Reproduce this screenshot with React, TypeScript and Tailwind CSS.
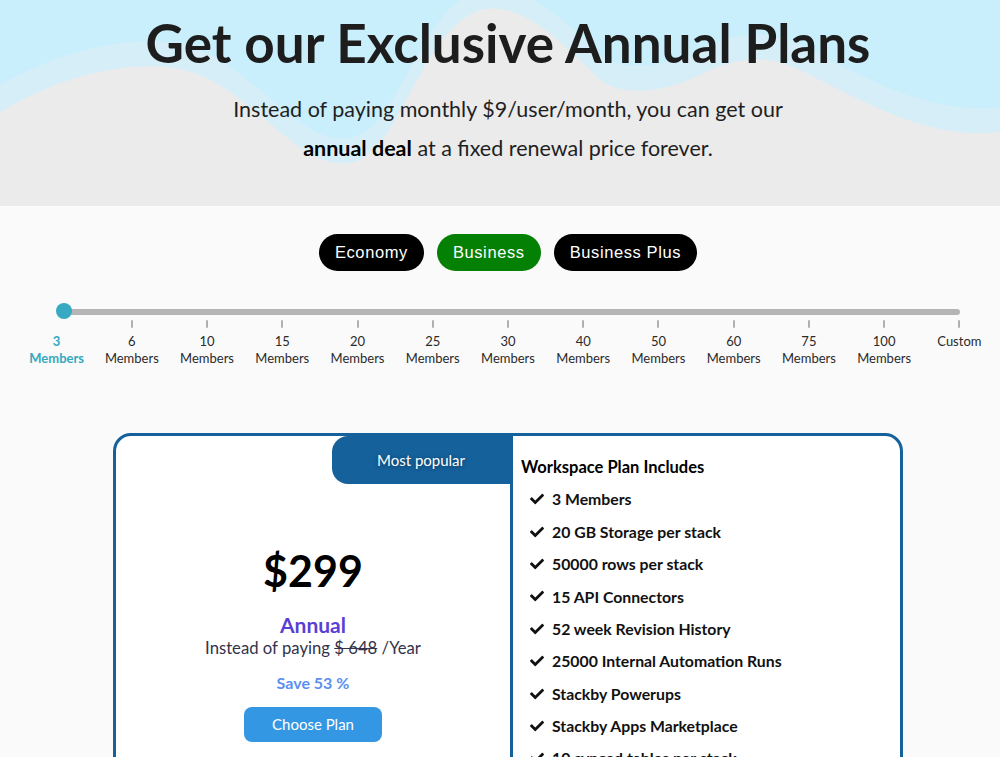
import { FaCheck } from "react-icons/fa";

const plans = [
  { name: "Economy", active: false },
  { name: "Business", active: true },
  { name: "Business Plus", active: false },
];

const steps = ["3", "6", "10", "15", "20", "25", "30", "40", "50", "60", "75", "100", "Custom"];

const features = [
  "3 Members",
  "20 GB Storage per stack",
  "50000 rows per stack",
  "15 API Connectors",
  "52 week Revision History",
  "25000 Internal Automation Runs",
  "Stackby Powerups",
  "Stackby Apps Marketplace",
  "10 synced tables per stack",
  "Priority Support",
];

const HeaderWaves = () => (
  <svg
    className="absolute inset-0 h-full w-full"
    viewBox="0 0 1000 206"
    preserveAspectRatio="none"
  >
    <rect width="1000" height="206" fill="#c9eefc" />
    <path
      d="M0,85 C70,45 150,30 200,50 C260,75 300,145 350,138 C400,130 420,5 480,-10 C520,-20 560,15 600,55 C620,70 660,70 700,50 C740,30 770,30 800,45 C870,80 930,115 1000,107 L1000,206 L0,206 Z"
      fill="#d6eef8"
    />
    <path
      d="M0,112 C70,70 150,55 200,75 C260,100 300,170 350,163 C400,155 420,30 480,10 C520,0 560,40 600,80 C620,95 660,95 700,75 C740,55 770,55 800,70 C870,105 930,140 1000,132 L1000,206 L0,206 Z"
      fill="#ebebeb"
    />
  </svg>
);

const Slider = () => (
  <div className="mt-[38px]">
    <div className="relative ml-[64px] h-[6px] w-[896px] rounded-full bg-[#b5b5b5]">
      <div className="absolute left-[-8px] top-[-6px] h-[16px] w-[16px] rounded-full bg-[#37a9c2]" />
    </div>
    <div className="ml-[19px] grid w-[978px] grid-cols-13">
      {steps.map((s, i) => (
        <div key={s} className="flex flex-col items-center">
          <div
            className={`mt-[5px] h-[8px] w-[2px] rounded-full ${i === 0 ? "bg-transparent" : "bg-[#b0b0b0]"}`}
          />
          <div
            className={`mt-[5px] text-center text-[13px] leading-[17px] ${i === 0 ? "font-bold text-[#35a8c0]" : "text-[#2a2a2a]"}`}
          >
            <div>{s}</div>
            {s !== "Custom" && <div>Members</div>}
          </div>
        </div>
      ))}
    </div>
  </div>
);

export default function App() {
  return (
    <div className="min-h-screen bg-[#fafafa] font-['Lato',sans-serif]">
      <header className="relative h-[206px] overflow-hidden">
        <HeaderWaves />
        <div className="relative flex flex-col items-center pl-[16px] pt-[14px] text-center">
          <h1 className="text-[53px] font-bold leading-[58px] text-[#1d1d1d]">
            Get our Exclusive Annual Plans
          </h1>
          <p className="mt-[18px] text-[21.5px] leading-[39px] text-[#1f1f1f]">
            Instead of paying monthly $9/user/month, you can get our
            <br />
            <span className="font-bold text-black">annual deal</span> at a fixed renewal price forever.
          </p>
        </div>
      </header>

      <section className="pt-[28px]">
        <div className="flex justify-center gap-[13px] pl-[16px] font-['Liberation_Sans',sans-serif]">
          {plans.map((p) => (
            <button
              key={p.name}
              className={`h-[37px] rounded-full px-[16px] text-[16.5px] tracking-[0.6px] text-white ${p.active ? "bg-[#048004]" : "bg-black"}`}
            >
              {p.name}
            </button>
          ))}
        </div>

        <Slider />

        <div className="ml-[113px] mt-[66px] w-[790px] pb-10">
          <div className="flex overflow-hidden rounded-[18px] border-[3px] border-[#15619c] bg-white">
            <div className="relative w-[397px] border-r-[3px] border-[#15619c]">
              <div className="absolute right-0 top-0 flex h-[48px] w-[178px] items-center justify-center rounded-l-[16px] bg-[#15619c] text-[15px] text-white [text-shadow:0_1px_4px_rgba(0,0,0,0.45)]">
                Most popular
              </div>
              <div className="flex flex-col items-center pt-[110px] text-center">
                <div className="text-[43px] font-bold leading-[50px] text-black">$299</div>
                <div className="mt-[16px] text-[21px] font-bold leading-[25px] text-[#5a3fd4]">
                  Annual
                </div>
                <div className="text-[16.7px] leading-[22px] text-[#33334d]">
                  Instead of paying <span className="line-through">$ 648</span> /Year
                </div>
                <div className="mt-[14px] text-[16px] font-bold leading-[20px] text-[#5b8ff0]">
                  Save 53 %
                </div>
                <button className="mt-[14px] h-[35px] w-[138px] rounded-[8px] bg-[#3497e3] text-[15px] text-white">
                  Choose Plan
                </button>
              </div>
            </div>
            <div className="flex-1 pl-[8px] pt-[21px]">
              <h3 className="text-[16.5px] font-bold leading-[20px] text-black">
                Workspace Plan Includes
              </h3>
              <ul className="mt-[6px] pl-[9px]">
                {features.map((f) => (
                  <li key={f} className="flex h-[32.4px] items-center gap-[8px] text-[15.8px] font-bold text-[#111]">
                    <FaCheck className="h-[14px] w-[14px]" />
                    {f}
                  </li>
                ))}
              </ul>
            </div>
          </div>
        </div>
      </section>
    </div>
  );
}
